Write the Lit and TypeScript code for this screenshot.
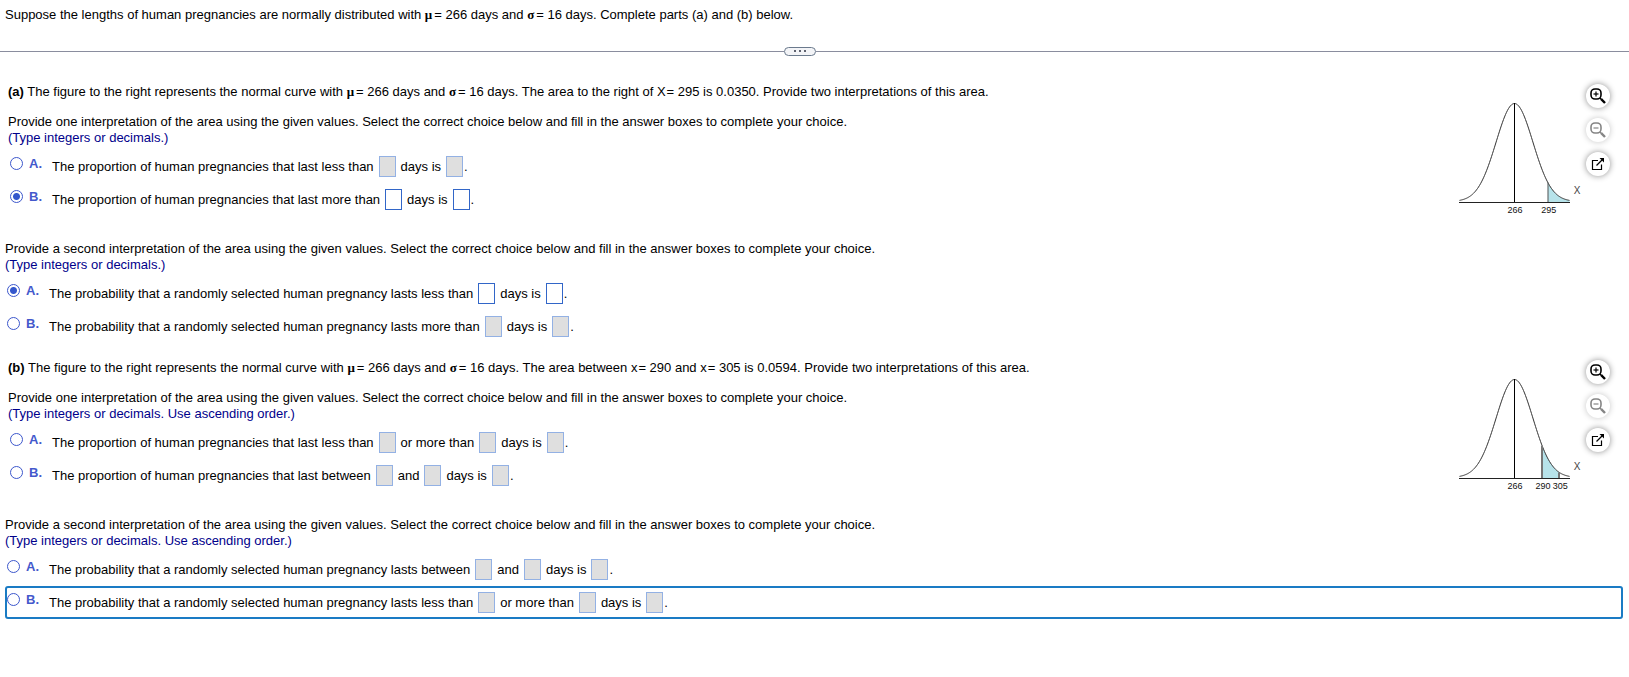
import { LitElement, html, svg, css, nothing, TemplateResult } from "lit";
import { customElement, property } from "lit/decorators.js";
import { classMap } from "lit/directives/class-map.js";

type Choice = { letter: string; parts: string[]; checked?: boolean; focused?: boolean };

const mu = html`<b class="greek">μ</b>`;
const sigma = html`<b class="greek">σ</b>`;
const variable = (name: string) => html`<span class="var">${name}</span>`;

/** Normal curve with a shaded tail or band. */
@customElement("normal-curve")
export class NormalCurve extends LitElement {
  @property({ type: Array }) marks: number[] = [];
  @property({ type: Boolean }) band = false;

  static styles = css`
    :host { display: block; }
    svg { display: block; }
    text { font-family: "Liberation Sans", Arial, sans-serif; font-size: 9px; fill: #111; text-anchor: middle; }
    .axis-name { font-size: 10px; fill: #444; }
    .curve { fill: none; stroke: #333; stroke-width: 1; }
    .axis { stroke: #222; stroke-width: 1; }
    .mean { stroke: #000; stroke-width: 1; }
    .mark { stroke: #555; stroke-width: 1; }
    .band .mark { stroke: #777; stroke-width: 2; }
    .area { fill: #b7e3ea; }
  `;

  private x(day: number) { return 56.5 + (day - 266) * 1.15; }
  private y(px: number) { return 101.5 - 98 * Math.exp(-0.5 * ((px - 56.5) / 18.4) ** 2); }
  private trace(from: number, to: number) {
    const pts: string[] = [];
    for (let p = from; p < to; p += 1) pts.push(`${p.toFixed(1)} ${this.y(p).toFixed(2)}`);
    pts.push(`${to.toFixed(1)} ${this.y(to).toFixed(2)}`);
    return pts.join(" L");
  }

  render() {
    const start = this.x(this.marks[0]);
    const end = this.band ? this.x(this.marks[1]) : 111.5;
    return html`<svg class=${classMap({ band: this.band })} width="126" height="118" viewBox="0 0 126 118" role="img" aria-label="Normal curve">
      <path class="area" d="M${start} 102.5 L${this.trace(start, end)} L${end} 102.5Z"></path>
      <path class="curve" d="M${this.trace(1.5, 111.5)}"></path>
      <line class="mean" x1="56.5" y1="3" x2="56.5" y2="102"></line>
      ${this.marks.map((m) => svg`<line class="mark" x1=${Math.round(this.x(m))} x2=${Math.round(this.x(m))} y1=${this.y(this.x(m))} y2="102"></line>`)}
      <line class="axis" x1="1" y1="102.5" x2="112" y2="102.5"></line>
      <text x="57" y="113">266</text>
      ${this.marks.map((m) => svg`<text x=${this.x(m) + 1} y="113">${m}</text>`)}
      <text class="axis-name" x="119" y="94">X</text>
    </svg>`;
  }
}

@customElement("app-root")
export class AppRoot extends LitElement {
  static styles = css`
    :host {
      display: block;
      font: 13px/16px "Liberation Sans", Arial, sans-serif;
      color: #000;
      background: #fff;
    }
    * { box-sizing: border-box; }
    p { margin: 0; }
    .intro { padding: 7px 5px 0; }
    .greek { font-family: "Liberation Serif", "Times New Roman", serif; font-size: 13px; line-height: 1; padding-right: 2px; }
    .var { padding-right: 1px; }
    .divider { display: flex; align-items: center; height: 10px; margin: 23px 0 28px; }
    .divider::before { content: ""; flex: 27; border-top: 1px solid #8a8d9e; }
    .divider::after { content: ""; flex: 28; border-top: 1px solid #8a8d9e; }
    .more {
      display: flex; align-items: center; justify-content: center; gap: 3px;
      width: 32px; height: 9px; padding: 0; margin: 0;
      border: 1px solid #6b7a8d; border-radius: 5px; background: #f3f4f7;
    }
    .more i { width: 2px; height: 2px; background: #5f6370; }
    .part { margin-bottom: 17px; }
    .top { display: flex; align-items: flex-start; justify-content: space-between; }
    .first { padding-left: 8px; flex: 1; }
    .statement { margin-bottom: 14px; }
    .second { padding: 23px 6px 0 5px; }
    .note { color: #00008b; }
    .choices { border: 0; margin: 0; padding: 4px 0 0; min-width: 0; }
    .choice { display: flex; align-items: center; height: 33px; border-radius: 3px; }
    .focused { outline: 2px solid #1a7bc4; outline-offset: -2px; }
    .pick { display: flex; align-items: center; gap: 6px; width: 44px; padding: 0 0 6px 2px; flex: none; }
    .letter { font-weight: bold; color: #4459cc; }
    .radio {
      appearance: none; flex: none; width: 13px; height: 13px; margin: 0;
      border: 1px solid #3c57cc; border-radius: 50%; background: #fff;
    }
    .radio:checked { background: radial-gradient(circle, #3457cc 3px, #fff 4px); }
    .sentence { display: flex; align-items: center; gap: 5px; white-space: nowrap; }
    .end { margin-left: -4px; }
    .box {
      width: 17px; height: 21px; padding: 0; margin: 0; border: 1px solid #3266c8;
      border-radius: 0; background: #fff; font: inherit; text-align: center;
    }
    .box:disabled { border-color: #93b1e4; background: #dfdfdf; }
    .figure { display: flex; align-items: flex-start; gap: 2px; padding-right: 19px; flex: none; }
    .plot { margin-top: 16px; }
    .tools { display: flex; flex-direction: column; gap: 10px; }
    .tool {
      display: grid; place-items: center; width: 24px; height: 24px; padding: 0;
      border: 0; border-radius: 50%; background: #fff; color: #000; box-shadow: 0 0 6px #8e8e8e;
    }
    .tool:disabled { color: #858585; box-shadow: 0 0 6px #c6c6c6; }
    .tool svg { display: block; }
  `;

  private magnifier(plus: boolean) {
    return html`<svg width="16" height="16" viewBox="0 0 16 16" fill="none" stroke="currentColor">
      <rect x="1" y="1" width="10" height="10" rx="4" stroke-width="1.6"></rect>
      <path d="M10 10 L11.5 11.5" stroke-width="1.5"></path>
      <path d="M11.2 11.2 L15 15" stroke-width="2.4"></path>
      <path d="M3.5 6 H8.5" stroke-width="1.2"></path>
      ${plus ? svg`<path d="M6 3.5 V8.5" stroke-width="1.2"></path>` : nothing}
    </svg>`;
  }

  private figure(marks: number[], band: boolean) {
    return html`<div class="figure">
      <normal-curve class="plot" .marks=${marks} .band=${band}></normal-curve>
      <div class="tools">
        <button class="tool" aria-label="Zoom in">${this.magnifier(true)}</button>
        <button class="tool" aria-label="Zoom out" disabled>${this.magnifier(false)}</button>
        <button class="tool" aria-label="Open in new window">
          <svg width="14" height="14" viewBox="0 0 14 14" fill="none" stroke="currentColor">
            <path d="M7 3.5 H1.5 V12.5 H10.5 V7.5" stroke-width="1.2"></path>
            <path d="M5.5 8.5 L11 3" stroke-width="1.2"></path>
            <path d="M8.5 1 H13 V5.5 Z" fill="currentColor" stroke="none"></path>
          </svg>
        </button>
      </div>
    </div>`;
  }

  private choices(name: string, list: Choice[]) {
    return html`<fieldset class="choices" aria-label="Choices">
      ${list.map((c) => html`<div class=${classMap({ choice: true, focused: !!c.focused })}>
        <label class="pick">
          <input class="radio" type="radio" name=${name} .checked=${!!c.checked} />
          <span class="letter">${c.letter}.</span>
        </label>
        <div class="sentence">
          ${c.parts.map((p) => html`<span>${p}</span><input class="box" type="text" aria-label=${p} ?disabled=${!c.checked} />`)}
          <span class="end">.</span>
        </div>
      </div>`)}
    </fieldset>`;
  }

  private prompt(which: string, note: string) {
    return html`<p>Provide ${which} interpretation of the area using the given values. Select the correct choice below and fill in the answer boxes to complete your choice.</p>
      <p class="note">${note}</p>`;
  }

  private part(id: string, statement: TemplateResult, note: string, marks: number[], band: boolean, one: Choice[], two: Choice[]) {
    return html`<section class="part">
      <div class="top">
        <div class="first">
          <p class="statement"><b>(${id})</b> The figure to the right represents the normal curve with ${mu}= 266 days and ${sigma}= 16 days. ${statement} Provide two interpretations of this area.</p>
          ${this.prompt("one", note)}
          ${this.choices(`${id}1`, one)}
        </div>
        ${this.figure(marks, band)}
      </div>
      <div class="second">
        ${this.prompt("a second", note)}
        ${this.choices(`${id}2`, two)}
      </div>
    </section>`;
  }

  render() {
    const prop = "The proportion of human pregnancies that last";
    const prob = "The probability that a randomly selected human pregnancy lasts";
    return html`
      <p class="intro">Suppose the lengths of human pregnancies are normally distributed with ${mu}= 266 days and ${sigma}= 16 days. Complete parts (a) and (b) below.</p>
      <div class="divider"><button class="more" aria-label="Show more"><i></i><i></i><i></i></button></div>
      ${this.part("a", html`The area to the right of ${variable("X")}= 295 is 0.0350.`, "(Type integers or decimals.)", [295], false,
        [
          { letter: "A", parts: [`${prop} less than`, "days is"] },
          { letter: "B", parts: [`${prop} more than`, "days is"], checked: true },
        ],
        [
          { letter: "A", parts: [`${prob} less than`, "days is"], checked: true },
          { letter: "B", parts: [`${prob} more than`, "days is"] },
        ])}
      ${this.part("b", html`The area between ${variable("x")}= 290 and ${variable("x")}= 305 is 0.0594.`, "(Type integers or decimals. Use ascending order.)", [290, 305], true,
        [
          { letter: "A", parts: [`${prop} less than`, "or more than", "days is"] },
          { letter: "B", parts: [`${prop} between`, "and", "days is"] },
        ],
        [
          { letter: "A", parts: [`${prob} between`, "and", "days is"] },
          { letter: "B", parts: [`${prob} less than`, "or more than", "days is"], focused: true },
        ])}
    `;
  }
}
